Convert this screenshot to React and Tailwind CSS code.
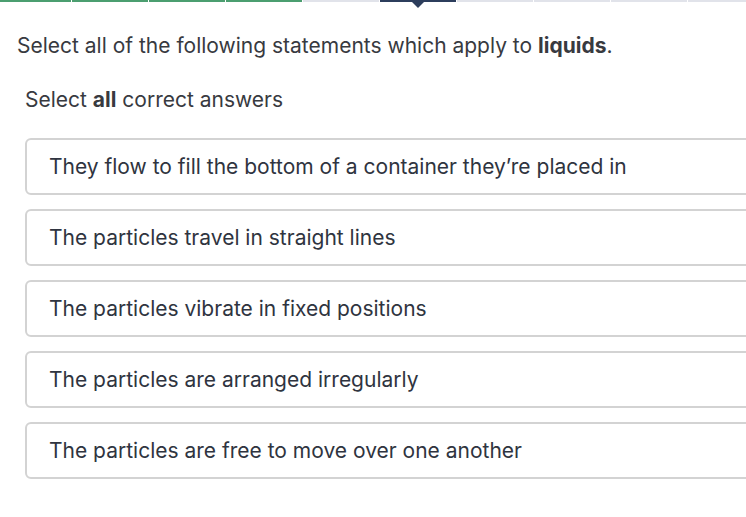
import React from 'react';

const segments = ['done', 'done', 'done', 'done', 'todo', 'current', 'todo', 'todo', 'todo', 'todo'];

const answers = [
    'They flow to fill the bottom of a container they’re placed in',
    'The particles travel in straight lines',
    'The particles vibrate in fixed positions',
    'The particles are arranged irregularly',
    'The particles are free to move over one another',
];

function ProgressBar() {
    return (
        <div className="flex gap-[1px] -ml-[5px]">
            {segments.map((s, i) => (
                <div key={i} className="relative w-[76px] shrink-0">
                    <div
                        className={
                            s === 'done'
                                ? 'h-[2px] bg-[#4b9e70]'
                                : s === 'current'
                                ? 'h-[2px] bg-[#2c3d5c]'
                                : 'h-[2px] bg-[#e1e3ea]'
                        }
                    />
                    {s === 'current' && (
                        <div className="absolute left-1/2 top-[2px] -translate-x-1/2 w-0 h-0 border-l-[6px] border-r-[6px] border-t-[6px] border-l-transparent border-r-transparent border-t-[#2c3d5c]" />
                    )}
                </div>
            ))}
        </div>
    );
}

export default function App() {
    return (
        <div
            className="w-[746px] h-[517px] overflow-hidden bg-white text-[#383a3f]"
            style={{ fontFamily: 'Inter, "Noto Sans", sans-serif' }}
        >
            <ProgressBar />
            <p className="mt-[30px] pl-[17px] text-[21px] leading-[28px] whitespace-nowrap">
                Select all of the following statements which apply to <span className="font-bold">liquids</span>.
            </p>
            <p className="mt-[26px] pl-[25px] text-[21px] leading-[28px] whitespace-nowrap">
                Select <span className="font-bold">all</span> correct answers
            </p>
            <div className="mt-[24px] ml-[25px] flex flex-col gap-[14px] w-[760px]">
                {answers.map((a) => (
                    <div
                        key={a}
                        className="h-[57px] flex items-center pl-[22px] border-2 border-[#d3d3d3] rounded-[6px] text-[21px] text-[#2f3440] whitespace-nowrap"
                    >
                        {a}
                    </div>
                ))}
            </div>
        </div>
    );
}
